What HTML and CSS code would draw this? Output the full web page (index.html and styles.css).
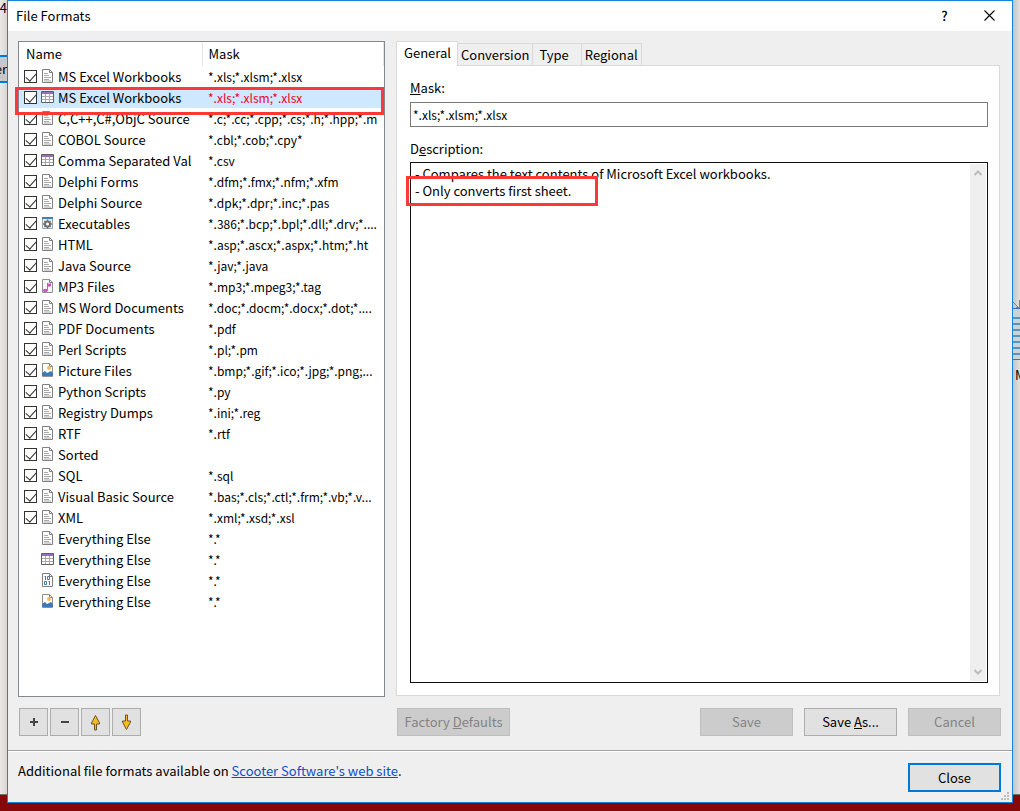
FILE: index.html
```html
<!DOCTYPE html>
<html lang="en">
<head>
    <meta charset="UTF-8">
    <meta name="viewport" content="width=device-width, initial-scale=1.0">
    <title>File Formats</title>
    <link rel="stylesheet" href="styles.css">
</head>
<body>
    <!-- Icons shared by the format list -->
    <svg class="icon-defs" width="0" height="0" aria-hidden="true">
        <symbol id="icon-text" viewBox="0 0 13 15">
            <path d="M1.5 .5h7l3 3v10h-10z" fill="#fff" stroke="#808080"/>
            <path d="M8.5 .5v3h3" fill="none" stroke="#808080"/>
            <path d="M3 4.5h4M3 6.5h5M3 8.5h7M3 10.5h5M3 12h7" stroke="#a8a8a8"/>
        </symbol>
        <symbol id="icon-table" viewBox="0 0 13 15">
            <path d="M.5 1.5h12v11H.5z" fill="#fff" stroke="#606060"/>
            <path d="M1 2h11v2H1z" fill="#9b6bc0"/>
            <path d="M1 6.5h11M1 9.5h11M4.5 4v8M8.5 4v8" stroke="#a8a8a8"/>
        </symbol>
        <symbol id="icon-exe" viewBox="0 0 13 15">
            <path d="M1.5 1.5h10v11h-10z" fill="#e8f0f6" stroke="#9aa4ac"/>
            <path d="M1 1h11v2H1z" fill="#3f7fbd"/>
            <circle cx="6.5" cy="8" r="2.5" fill="#fff" stroke="#707070" stroke-width="2"/>
            <path d="M6.5 3.500v2M6.5 10.500v2M2 8h2M9 8h2M3.500 5l1 1M9.500 5l-1 1M3.500 11l1-1M9.500 11l-1-1" stroke="#707070" stroke-width="1.500"/>
        </symbol>
        <symbol id="icon-music" viewBox="0 0 13 15">
            <path d="M1.5 .5h7l3 3v10h-10z" fill="#f6f6f6" stroke="#909090"/>
            <path d="M8.5 .5v3h3" fill="none" stroke="#808080"/>
            <path d="M6 4h1l1 1 2-1v3l-2 1-1-1v4l-1 2H3l-1-1v-1l1-1h3z" fill="#cb54bd"/>
        </symbol>
        <symbol id="icon-picture" viewBox="0 0 13 15">
            <path d="M1.5 .5h7l3 3v10h-10z" fill="#fff" stroke="#909090"/>
            <path d="M8.5 .5v3h3" fill="none" stroke="#808080"/>
            <circle cx="8" cy="5" r="2" fill="#f2bd62"/>
            <path d="M1 13v-3l3-2 2 2 2-1 2-1 2 2v3z" fill="#3f7ab5"/>
        </symbol>
        <symbol id="icon-binary" viewBox="0 0 13 15">
            <path d="M1.5 .5h7l3 3v10h-10z" fill="#fff" stroke="#808080"/>
            <path d="M8.5 .5v3h3" fill="none" stroke="#808080"/>
            <path d="M4.500 3v4M3.500 3.500h1M6.500 3.500h2v3h-2zM3.500 8.500h2v3h-2zM8.500 8v4M7.500 8.500h1" fill="none" stroke="#3f7fa8"/>
        </symbol>
    </svg>

    <div class="desktop">
        <div class="edge edge-left" aria-hidden="true">
            <div class="edge-text">5.4</div>
            <div class="edge-button">er</div>
        </div>

        <main class="dialog">
            <header class="titlebar">
                <h1>File Formats</h1>
                <button type="button" class="title-button help" aria-label="Help">?</button>
                <button type="button" class="title-button" aria-label="Close window">
                    <svg width="12" height="12" viewBox="0 0 12 12"><path d="M.5 .5l10 10M10.500 .5l-10 10" stroke="#000" stroke-width="1.100"/></svg>
                </button>
            </header>

            <div class="content">
                <div class="format-list">
                    <table>
                        <thead>
                            <tr><th class="name">Name</th><th>Mask</th></tr>
                        </thead>
                        <tbody>
                            <tr><td><label><input type="checkbox" checked><svg class="icon"><use href="#icon-text"/></svg>MS Excel Workbooks</label></td><td>*.xls;*.xlsm;*.xlsx</td></tr>
                            <tr class="selected"><td><label><input type="checkbox" checked><svg class="icon"><use href="#icon-table"/></svg>MS Excel Workbooks</label></td><td>*.xls;*.xlsm;*.xlsx</td></tr>
                            <tr><td><label><input type="checkbox" checked><svg class="icon"><use href="#icon-text"/></svg>C,C++,C#,ObjC Source</label></td><td>*.c;*.cc;*.cpp;*.cs;*.h;*.hpp;*.m</td></tr>
                            <tr><td><label><input type="checkbox" checked><svg class="icon"><use href="#icon-text"/></svg>COBOL Source</label></td><td>*.cbl;*.cob;*.cpy*</td></tr>
                            <tr><td><label><input type="checkbox" checked><svg class="icon"><use href="#icon-table"/></svg>Comma Separated Val</label></td><td>*.csv</td></tr>
                            <tr><td><label><input type="checkbox" checked><svg class="icon"><use href="#icon-text"/></svg>Delphi Forms</label></td><td>*.dfm;*.fmx;*.nfm;*.xfm</td></tr>
                            <tr><td><label><input type="checkbox" checked><svg class="icon"><use href="#icon-text"/></svg>Delphi Source</label></td><td>*.dpk;*.dpr;*.inc;*.pas</td></tr>
                            <tr><td><label><input type="checkbox" checked><svg class="icon"><use href="#icon-exe"/></svg>Executables</label></td><td>*.386;*.bcp;*.bpl;*.dll;*.drv;*....</td></tr>
                            <tr><td><label><input type="checkbox" checked><svg class="icon"><use href="#icon-text"/></svg>HTML</label></td><td>*.asp;*.ascx;*.aspx;*.htm;*.ht</td></tr>
                            <tr><td><label><input type="checkbox" checked><svg class="icon"><use href="#icon-text"/></svg>Java Source</label></td><td>*.jav;*.java</td></tr>
                            <tr><td><label><input type="checkbox" checked><svg class="icon"><use href="#icon-music"/></svg>MP3 Files</label></td><td>*.mp3;*.mpeg3;*.tag</td></tr>
                            <tr><td><label><input type="checkbox" checked><svg class="icon"><use href="#icon-text"/></svg>MS Word Documents</label></td><td>*.doc;*.docm;*.docx;*.dot;*....</td></tr>
                            <tr><td><label><input type="checkbox" checked><svg class="icon"><use href="#icon-text"/></svg>PDF Documents</label></td><td>*.pdf</td></tr>
                            <tr><td><label><input type="checkbox" checked><svg class="icon"><use href="#icon-text"/></svg>Perl Scripts</label></td><td>*.pl;*.pm</td></tr>
                            <tr><td><label><input type="checkbox" checked><svg class="icon"><use href="#icon-picture"/></svg>Picture Files</label></td><td>*.bmp;*.gif;*.ico;*.jpg;*.png;...</td></tr>
                            <tr><td><label><input type="checkbox" checked><svg class="icon"><use href="#icon-text"/></svg>Python Scripts</label></td><td>*.py</td></tr>
                            <tr><td><label><input type="checkbox" checked><svg class="icon"><use href="#icon-text"/></svg>Registry Dumps</label></td><td>*.ini;*.reg</td></tr>
                            <tr><td><label><input type="checkbox" checked><svg class="icon"><use href="#icon-text"/></svg>RTF</label></td><td>*.rtf</td></tr>
                            <tr><td><label><input type="checkbox" checked><svg class="icon"><use href="#icon-text"/></svg>Sorted</label></td><td></td></tr>
                            <tr><td><label><input type="checkbox" checked><svg class="icon"><use href="#icon-text"/></svg>SQL</label></td><td>*.sql</td></tr>
                            <tr><td><label><input type="checkbox" checked><svg class="icon"><use href="#icon-text"/></svg>Visual Basic Source</label></td><td>*.bas;*.cls;*.ctl;*.frm;*.vb;*.v...</td></tr>
                            <tr><td><label><input type="checkbox" checked><svg class="icon"><use href="#icon-text"/></svg>XML</label></td><td>*.xml;*.xsd;*.xsl</td></tr>
                            <!-- Fallback formats, these can't be switched off -->
                            <tr><td><div class="fixed"><svg class="icon"><use href="#icon-text"/></svg>Everything Else</div></td><td>*.*</td></tr>
                            <tr><td><div class="fixed"><svg class="icon"><use href="#icon-table"/></svg>Everything Else</div></td><td>*.*</td></tr>
                            <tr><td><div class="fixed"><svg class="icon"><use href="#icon-binary"/></svg>Everything Else</div></td><td>*.*</td></tr>
                            <tr><td><div class="fixed"><svg class="icon"><use href="#icon-picture"/></svg>Everything Else</div></td><td>*.*</td></tr>
                        </tbody>
                    </table>
                    <div class="highlight highlight-row"></div>
                </div>

                <section class="details">
                    <div class="tabs" role="tablist">
                        <button type="button" class="tab active" role="tab" aria-selected="true">General</button>
                        <button type="button" class="tab" role="tab">Conversion</button>
                        <button type="button" class="tab tab-type" role="tab">Type</button>
                        <button type="button" class="tab" role="tab">Regional</button>
                    </div>
                    <div class="panel">
                        <label for="mask"><u>M</u>ask:</label>
                        <input type="text" id="mask" value="*.xls;*.xlsm;*.xlsx">
                        <label for="description">D<u>e</u>scription:</label>
                        <div class="description">
                            <textarea id="description">- Compares the text contents of Microsoft Excel workbooks.
- Only converts first sheet.</textarea>
                            <div class="scrollbar" aria-hidden="true">
                                <svg width="10" height="8" viewBox="0 0 10 8"><path d="M1.500 6L5 2.500 8.500 6" fill="none" stroke="#bcbcbc" stroke-width="2"/></svg>
                                <svg width="10" height="8" viewBox="0 0 10 8"><path d="M1.500 2L5 5.500 8.500 2" fill="none" stroke="#bcbcbc" stroke-width="2"/></svg>
                            </div>
                            <div class="highlight highlight-note"></div>
                        </div>
                    </div>
                </section>

                <div class="toolbar">
                    <button type="button" class="tool" aria-label="Add">
                        <svg width="10" height="10" viewBox="0 0 10 10"><path d="M1 5h8M5 1v8" stroke="#444" stroke-width="2"/></svg>
                    </button>
                    <button type="button" class="tool" aria-label="Remove">
                        <svg width="10" height="10" viewBox="0 0 10 10"><path d="M1 5h8" stroke="#444" stroke-width="2"/></svg>
                    </button>
                    <button type="button" class="tool" aria-label="Move up">
                        <svg width="11" height="17" viewBox="0 0 11 17"><path d="M5.500 1.500l4 7.500v1H6.500v6h-2v-6h-3V9z" fill="#fcbc20" stroke="#6b5420"/></svg>
                    </button>
                    <button type="button" class="tool" aria-label="Move down">
                        <svg width="11" height="17" viewBox="0 0 11 17"><path d="M5.500 15.500l4-7.500V7h-3V1h-2v6h-3v1z" fill="#fcbc20" stroke="#6b5420"/></svg>
                    </button>
                </div>

                <div class="toolbar actions">
                    <button type="button" class="btn defaults" disabled>Factory <u>D</u>efaults</button>
                    <button type="button" class="btn" disabled>Save</button>
                    <button type="button" class="btn">Save <u>A</u>s...</button>
                    <button type="button" class="btn" disabled>Cancel</button>
                </div>
            </div>

            <footer class="footer">
                <p>Additional file formats available on <a href="#">Scooter Software's web site</a>.</p>
                <button type="button" class="btn close">Close</button>
                <svg class="grip" width="8" height="8" viewBox="0 0 8 8" aria-hidden="true"><path d="M6 0h2v2H6zM3 3h2v2H3zM6 3h2v2H6zM0 6h2v2H0zM3 6h2v2H3zM6 6h2v2H6z" fill="#bcbcbc"/></svg>
            </footer>
        </main>

        <div class="edge edge-right" aria-hidden="true">
            <svg class="edge-corner" width="8" height="8" viewBox="0 0 8 8"><path d="M0 2l5 5M6.500 0v8M3 7.500h5" stroke="#808080" fill="none"/></svg>
            <div class="edge-lines"></div>
            <div class="edge-label">M</div>
        </div>
    </div>
</body>
</html>
```

FILE: styles.css
```css
* {
    box-sizing: border-box;
}
body {
    margin: 0;
    background-color: #860808;
    color: #000;
    font-family: "Noto Sans CJK SC", "Noto Sans", sans-serif;
    font-size: 13px;
    line-height: 16px;
}
button, input, textarea {
    font: inherit;
    color: inherit;
    margin: 0;
}
.icon-defs {
    position: absolute;
}
.desktop {
    display: grid;
    grid-template-columns: 7px minmax(0, 1fr) 7px;
    min-height: 100vh;
    padding-bottom: 8px;
}

/* Parts of the window behind the dialog */
.edge {
    background-color: #dcdcdc;
    border-bottom: 1px solid #707070;
    margin-bottom: 8px;
    overflow: hidden;
}
.edge-left {
    background: linear-gradient(to right, #e9e9e9, #d6d6d6);
}
.edge-right {
    background: linear-gradient(to right, #c4c4c4, #e2e2e2);
}
.edge-text {
    display: flex;
    justify-content: flex-end;
    padding-bottom: 39px;
}
.edge-button {
    display: flex;
    align-items: center;
    justify-content: flex-end;
    height: 28px;
    background-color: #c8c8c8;
    border: solid #0078d7;
    border-width: 2px 0;
}
.edge-corner {
    display: block;
    margin-top: 300px;
}
.edge-lines {
    height: 52px;
    border: solid #3f70b0;
    border-width: 1px 0;
    padding-top: 8px;
    background: repeating-linear-gradient(#5b93b8 0 2px, #c9d4da 2px 6px) content-box, #c9d4da;
}
.edge-label {
    margin-top: 7px;
    padding-left: 2px;
}

/* Dialog */
.dialog {
    display: flex;
    flex-direction: column;
    background-color: #efefef;
    border: 1px solid #1883d7;
}
.titlebar {
    display: flex;
    align-items: center;
    height: 30px;
    background-color: #fff;
    padding-left: 8px;
}
.titlebar h1 {
    flex: 1;
    margin: 0;
    font-size: 13px;
    font-weight: normal;
}
.title-button {
    display: flex;
    align-items: center;
    justify-content: center;
    width: 45px;
    height: 30px;
    padding: 0;
    border: none;
    background: none;
}
.help {
    font-weight: 500;
}
.content {
    flex: 1;
    display: grid;
    grid-template-columns: 367px minmax(0, 1fr);
    grid-template-rows: 1fr auto;
    gap: 11px;
    padding: 10px 11px 14px 10px;
}

/* Format list */
.format-list {
    position: relative;
    background-color: #fff;
    border: 1px solid #828790;
}
table {
    width: 100%;
    border-collapse: collapse;
    table-layout: fixed;
}
th {
    height: 24px;
    padding: 0 6px;
    text-align: left;
    font-weight: normal;
    border-right: 1px solid #e5e5e5;
}
.name {
    width: 183px;
    padding-left: 7px;
}
td {
    height: 21px;
    padding: 0;
    white-space: nowrap;
}
td:first-child {
    padding-left: 5px;
}
td:last-child {
    padding-left: 6px;
    font-size: 12px;
}
td label, .fixed {
    display: flex;
    align-items: center;
}
.fixed {
    padding-left: 17px;
}
.selected {
    background-color: #cde8ff;
}
.selected td:last-child {
    color: #f00020;
}
td input {
    appearance: none;
    display: flex;
    justify-content: center;
    width: 13px;
    height: 13px;
    margin-right: 4px;
    border: 1px solid #333;
    background-color: #fff;
}
td input:checked::after {
    content: "";
    width: 5px;
    height: 9px;
    border: solid #333;
    border-width: 0 1px 1px 0;
    transform: rotate(42deg);
}
.icon {
    flex: none;
    width: 13px;
    height: 15px;
    margin-right: 4px;
}

/* Red marker boxes */
.highlight {
    position: absolute;
    border: 3px solid #fc3838;
    pointer-events: none;
}
.highlight-row {
    top: 45px;
    left: -4px;
    right: 0;
    height: 28px;
}
.highlight-note {
    top: 13px;
    left: -5px;
    width: 192px;
    height: 30px;
}

/* Details */
.details {
    display: flex;
    flex-direction: column;
    padding-right: 1px;
}
.tabs {
    display: flex;
    align-items: flex-end;
    height: 24px;
}
.tab {
    height: 22px;
    padding: 0 3px;
    border: 1px solid #d9d9d9;
    border-width: 1px 1px 0 0;
    background-color: #efefef;
}
.tab-type {
    padding: 0 12px 0 6px;
}
.tab.active {
    position: relative;
    height: 25px;
    margin-bottom: -1px;
    padding: 0 6px 3px 7px;
    border-left-width: 1px;
    background-color: #fff;
}
.panel {
    flex: 1;
    display: flex;
    flex-direction: column;
    padding: 14px 11px 12px 13px;
    margin-bottom: 1px;
    border: 1px solid #d9d9d9;
    background-color: #fff;
}
.panel input {
    height: 25px;
    margin: 6px 0 14px;
    padding: 0 2px;
    border: 1px solid #7a7a7a;
    font-size: 12px;
}
.description {
    position: relative;
    flex: 1;
    display: flex;
    margin-top: 5px;
    border: 1px solid #111;
}
.description textarea {
    flex: 1;
    min-width: 0;
    padding: 2px 4px;
    border: none;
    line-height: 17px;
    resize: none;
    outline: none;
}
.scrollbar {
    display: flex;
    flex-direction: column;
    align-items: center;
    justify-content: space-between;
    width: 16px;
    margin: 1px;
    padding: 5px 0;
    background-color: #efefef;
}

/* Buttons */
.toolbar {
    display: flex;
    gap: 2px;
    padding-left: 1px;
}
.actions {
    gap: 11px;
}
.tool, .btn {
    display: flex;
    align-items: center;
    justify-content: center;
    height: 28px;
    padding: 0;
    border: 1px solid #adadad;
    background-color: #e1e1e1;
}
.tool {
    width: 29px;
}
.btn {
    width: 93px;
    white-space: pre;
}
.btn:disabled {
    border-color: #bfbfbf;
    background-color: #ccc;
    color: #838383;
}
.defaults {
    width: 113px;
    margin-right: auto;
}
.close {
    height: 29px;
    border: 2px solid #0078d7;
}
.footer {
    position: relative;
    display: flex;
    justify-content: space-between;
    align-items: flex-start;
    padding: 12px 11px 10px 10px;
    border-top: 1px solid #a0a0a0;
    box-shadow: inset 0 1px #fff;
}
.footer p {
    margin: 0;
}
.footer a {
    color: #0a50c8;
}
.grip {
    position: absolute;
    right: 3px;
    bottom: 2px;
}
```
